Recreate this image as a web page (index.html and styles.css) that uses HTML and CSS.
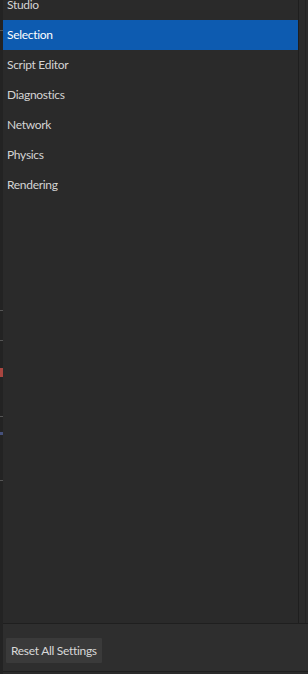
FILE: index.html
```html
<!DOCTYPE html>
<html lang="en">
<head>
    <meta charset="UTF-8">
    <meta name="viewport" content="width=device-width, initial-scale=1.0">
    <title>Settings</title>
    <link rel="stylesheet" href="styles.css">
</head>
<body>

    <div class="window">
        <div class="gutter">
            <span class="tick t1"></span>
            <span class="tick t2"></span>
            <span class="tick t3"></span>
            <span class="tick red"></span>
            <span class="tick t4"></span>
            <span class="tick blue"></span>
            <span class="tick t5"></span>
        </div>
        <div class="panel">
            <div class="body">
                <ul class="list">
                    <li>Studio</li>
                    <li class="active">Selection</li>
                    <li>Script Editor</li>
                    <li>Diagnostics</li>
                    <li>Network</li>
                    <li>Physics</li>
                    <li>Rendering</li>
                </ul>
                <div class="rail"></div>
            </div>
            <div class="footer">
                <button class="reset">Reset All Settings</button>
            </div>
        </div>
    </div>

</body>
</html>
```

FILE: styles.css
```css
* {
  margin: 0;
  padding: 0;
  box-sizing: border-box;
}
body {
    font-family: Lato, "Open Sans", sans-serif;
    background-color: #2b2b2b;
    height: 674px;
    overflow: hidden;
}
.window {
    display: flex;
    height: 674px;
}
.gutter {
    position: relative;
    width: 3px;
    background: #232323;
}
.tick {
    position: absolute;
    left: 0;
    width: 3px;
    height: 1px;
    background: #555;
}
.t1 { top: 30px; }
.t2 { top: 310px; }
.t3 { top: 340px; }
.t4 { top: 416px; }
.t5 { top: 480px; }
.red {
    top: 368px;
    height: 9px;
    background: #a8453f;
}
.blue {
    top: 432px;
    height: 3px;
    background: #45507a;
}
.panel {
    flex: 1;
    display: flex;
    flex-direction: column;
}
.body {
    flex: 1;
    display: flex;
    border-bottom: 1px solid #1f1f1f;
}
.list {
    flex: 1;
    list-style: none;
    background: #2a2a2a;
    border-right: 1px solid #1e1e1e;
    margin-top: -10px;
}
.list li {
    height: 30px;
    line-height: 30px;
    padding-left: 4px;
    font-size: 12px;
    letter-spacing: -0.3px;
    color: #d4d4d4;
}
.list li.active {
    background: #0d5bb0;
    color: #ffffff;
}
.rail {
    width: 7px;
    background: #2b2b2b;
    border-right: 1px solid #242424;
    margin-right: 2px;
}
.footer {
    height: 48px;
    background: #2e2e2e;
    border-bottom: 1px solid #1f1f1f;
    padding: 14px 0 0 3px;
    margin-bottom: 2px;
}
.reset {
    font-family: inherit;
    font-size: 12px;
    letter-spacing: -0.3px;
    color: #d8d8d8;
    background: #3a3a3a;
    border: none;
    border-radius: 1px;
    height: 25px;
    padding: 0 5px;
}
```
